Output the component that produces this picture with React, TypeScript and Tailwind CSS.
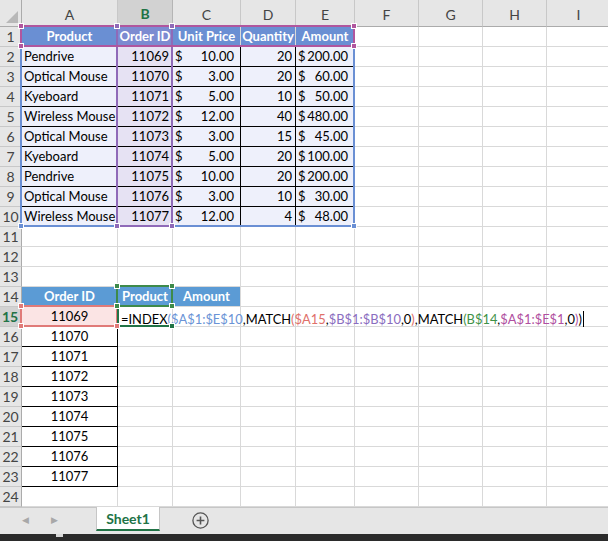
import React from 'react'

const COLS = ['A', 'B', 'C', 'D', 'E', 'F', 'G', 'H', 'I']
const WIDTHS = [22, 96, 55, 68, 55, 59, 64, 64, 64, 64]
const X = WIDTHS.reduce<number[]>((acc, w) => [...acc, acc[acc.length - 1] + w], [0])
const rowTop = (r: number) => 27 + (r - 1) * 20

const orders = [
  ['Pendrive', 11069, '10.00', 20, '200.00'],
  ['Optical Mouse', 11070, '3.00', 20, '60.00'],
  ['Kyeboard', 11071, '5.00', 10, '50.00'],
  ['Wireless Mouse', 11072, '12.00', 40, '480.00'],
  ['Optical Mouse', 11073, '3.00', 15, '45.00'],
  ['Kyeboard', 11074, '5.00', 20, '100.00'],
  ['Pendrive', 11075, '10.00', 20, '200.00'],
  ['Optical Mouse', 11076, '3.00', 10, '30.00'],
  ['Wireless Mouse', 11077, '12.00', 4, '48.00'],
] as const

const font = { fontFamily: 'Lato, "Open Sans", sans-serif' }

function Range({ c1, r1, c2, r2, color, handles = [true, true, true, true] }: {
  c1: number; r1: number; c2: number; r2: number; color: string; handles?: boolean[]
}) {
  const left = X[c1]
  const right = X[c2 + 1]
  const top = rowTop(r1)
  const bottom = rowTop(r2 + 1)
  const pts = [
    [left, top],
    [right, top],
    [left, bottom],
    [right, bottom],
  ]
  return (
    <>
      <div
        className="pointer-events-none absolute z-20 border-2"
        style={{ left: left - 2, top: top - 2, width: right - left + 2, height: bottom - top + 2, borderColor: color }}
      />
      {pts.map(([x, y], i) =>
        handles[i] ? (
          <div
            key={i}
            className="pointer-events-none absolute z-30 h-[6px] w-[6px] border border-white"
            style={{ left: x - 4, top: y - 4, backgroundColor: color }}
          />
        ) : null
      )}
    </>
  )
}

function Cell({ className = '', children }: { className?: string; children?: React.ReactNode }) {
  return (
    <div className={`flex h-[20px] items-center overflow-visible whitespace-nowrap border-b border-r border-[#d9d9d9] text-[13px] leading-none text-black ${className}`}>
      {children}
    </div>
  )
}

function Money({ v }: { v: string }) {
  return (
    <span className="flex w-full justify-between pl-[2px] pr-[6px]">
      <span>$</span>
      <span>{v}</span>
    </span>
  )
}

function dataCell(r: number, c: number): { cls: string; node: React.ReactNode } {
  // top table
  if (r === 1 && c <= 4) {
    const labels = ['Product', 'Order ID', 'Unit Price', 'Quantity', 'Amount']
    return {
      cls: `justify-center font-bold text-white border-[#3a5a8a] ${c === 1 ? 'bg-[#7c8bd1]' : 'bg-[#6a8fd3]'}`,
      node: labels[c],
    }
  }
  if (r >= 2 && r <= 10 && c <= 4) {
    const o = orders[r - 2]
    const bg = c === 1 ? 'bg-[#e6e2f3]' : 'bg-[#eef0fb]'
    const base = `${bg} border-black`
    if (c === 0) return { cls: `${base} pl-[2px]`, node: o[0] }
    if (c === 1) return { cls: `${base} justify-end pr-[3px]`, node: o[1] }
    if (c === 2) return { cls: base, node: <Money v={o[2]} /> }
    if (c === 3) return { cls: `${base} justify-end pr-[3px]`, node: o[3] }
    return { cls: base, node: <Money v={o[4]} /> }
  }
  // lookup table
  if (r === 14 && c <= 2) {
    const labels = ['Order ID', 'Product', 'Amount']
    return { cls: 'justify-center bg-[#5b9bd5] font-bold text-white border-[#2f4f70]', node: labels[c] }
  }
  if (r === 15 && c === 0) return { cls: 'justify-center bg-[#fbe4e4] border-black', node: 11069 }
  if (r >= 16 && r <= 23 && c === 0) return { cls: 'justify-center bg-white border-black', node: 11054 + r }
  if (r === 15 && c === 1) {
    return {
      cls: 'relative z-10 pl-[3px]',
      node: (
        <span className="text-[12.9px]">
          =INDEX<span className="text-[#6a93d6]">(</span>
          <span className="text-[#6a93d6]">$A$1:$E$10</span>,MATCH<span className="text-[#e0706a]">(</span>
          <span className="text-[#e0706a]">$A15</span>,<span className="text-[#8a6dc0]">$B$1:$B$10</span>,0
          <span className="text-[#e0706a]">)</span>,MATCH<span className="text-[#3e9147]">(</span>
          <span className="text-[#3e9147]">B$14</span>,<span className="text-[#b04fa0]">$A$1:$E$1</span>,0
          <span className="text-[#b04fa0]">)</span>)
          <span className="ml-[1px] inline-block h-[16px] w-[1px] translate-y-[3px] bg-black" />
        </span>
      ),
    }
  }
  return { cls: 'bg-white', node: null }
}

export default function App() {
  const rows = Array.from({ length: 24 }, (_, i) => i + 1)
  return (
    <div className="flex h-[541px] w-[608px] flex-col overflow-hidden bg-white" style={font}>
      <div className="relative h-[507px] overflow-hidden">
        <div
          className="grid"
          style={{ gridTemplateColumns: WIDTHS.map((w) => `${w}px`).join(' '), gridTemplateRows: `27px repeat(24, 20px)` }}
        >
          {/* corner */}
          <div className="relative border-b border-r border-[#ababab] bg-[#e6e6e6]">
            <div className="absolute bottom-[3px] right-[3px] h-0 w-0 border-b-[12px] border-l-[12px] border-b-[#b8b8b8] border-l-transparent" />
          </div>
          {COLS.map((c) => (
            <div
              key={c}
              className={`flex items-center justify-center border-r pt-[2px] text-[14px] ${
                c === 'B'
                  ? 'border-b-2 border-b-[#217346] border-r-[#b5b5b5] bg-[#d2d2d2] font-bold text-[#217346]'
                  : 'border-b border-b-[#ababab] border-r-[#c8c8c8] bg-[#e6e6e6] text-[#444]'
              }`}
            >
              {c}
            </div>
          ))}
          {rows.map((r) => (
            <React.Fragment key={r}>
              <div
                className={`flex items-center justify-center border-b border-b-[#c8c8c8] text-[14px] ${
                  r === 15
                    ? 'border-r-2 border-r-[#217346] bg-[#d2d2d2] font-bold text-[#217346]'
                    : 'border-r border-r-[#ababab] bg-[#e6e6e6] text-[#444]'
                }`}
              >
                {r}
              </div>
              {COLS.map((_, c) => {
                const { cls, node } = dataCell(r, c)
                return (
                  <Cell key={c} className={cls}>
                    {node}
                  </Cell>
                )
              })}
            </React.Fragment>
          ))}
        </div>

        {/* formula reference ranges */}
        <Range c1={1} r1={1} c2={5} r2={10} color="#6a8fd4" handles={[false, false, true, true]} />
        <Range c1={2} r1={1} c2={2} r2={10} color="#8f6ab8" />
        <Range c1={1} r1={1} c2={5} r2={1} color="#b0569e" />
        <Range c1={1} r1={15} c2={1} r2={15} color="#e07a78" />
        <Range c1={2} r1={14} c2={2} r2={14} color="#3e8a4a" />
        {/* active cell */}
        <div
          className="pointer-events-none absolute z-20 border-b-2 border-l-2 border-[#217346]"
          style={{ left: X[2] - 1, top: rowTop(15) - 1, width: X[3] - X[2], height: 21 }}
        />
        <div
          className="pointer-events-none absolute z-30 h-[6px] w-[6px] border border-white bg-[#217346]"
          style={{ left: X[3] - 4, top: rowTop(16) - 4 }}
        />
      </div>

      {/* sheet tabs */}
      <div className="flex h-[27px] items-start border-t border-[#c6c6c6] bg-[#e6e6e6]">
        <div className="flex h-[24px] w-[96px] items-center gap-[22px] pl-[22px] text-[9px] text-[#a8a8a8]">
          <span>◀</span>
          <span>▶</span>
        </div>
        <div className="-mt-px flex h-[24px] w-[64px] items-center justify-center border-x border-b-2 border-x-[#c6c6c6] border-b-[#217346] bg-white text-[14px] font-bold text-[#217346]">
          Sheet1
        </div>
        <div className="flex h-[24px] items-center pl-[32px]">
          <svg width="17" height="17" viewBox="0 0 17 17" fill="none" stroke="#555" strokeWidth="1.3">
            <circle cx="8.5" cy="8.5" r="7.6" />
            <path d="M8.5 4.6v7.8M4.6 8.5h7.8" strokeWidth="1.6" />
          </svg>
        </div>
      </div>
      <div className="relative h-[7px] bg-[#2b2b2b]">
        <div className="absolute left-[56px] top-0 h-[3px] w-[7px] bg-[#d8d8d8]" />
      </div>
    </div>
  )
}
